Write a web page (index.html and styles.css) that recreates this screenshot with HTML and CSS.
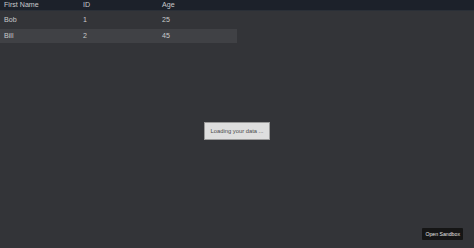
FILE: index.html
```html
<!DOCTYPE html>
<html>
<head>
<meta charset="utf-8">
<link rel="stylesheet" href="styles.css">
</head>
<body>
<div class="grid">
  <div class="header">
    <div class="hrow">
      <div class="cell">First Name</div>
      <div class="cell">ID</div>
      <div class="cell">Age</div>
    </div>
  </div>
  <div class="body">
    <div class="row odd">
      <div class="cell">Bob</div>
      <div class="cell">1</div>
      <div class="cell">25</div>
    </div>
    <div class="row even">
      <div class="cell">Bill</div>
      <div class="cell">2</div>
      <div class="cell">45</div>
    </div>
    <div class="overlay">
      <div class="loading">Loading your data ...</div>
    </div>
  </div>
</div>
<a class="sandbox">Open Sandbox</a>
</body>
</html>
```
FILE: styles.css
```css
html, body {
  margin: 0;
  padding: 0;
  height: 100%;
}
body {
  background: #333438;
  font-family: "Liberation Sans", Arial, sans-serif;
  font-size: 7.1px;
  color: #c9cacc;
  overflow: hidden;
}
.grid {
  display: flex;
  flex-direction: column;
  height: 100%;
}
.header {
  background: #1c212a;
  height: 11px;
  border-bottom: 1px solid #2a2f37;
  box-sizing: border-box;
}
.hrow, .row {
  display: grid;
  grid-template-columns: 79px 79px 79px;
  width: 237px;
}
.hrow .cell {
  line-height: 10px;
  padding-left: 4px;
  color: #c8c9cc;
}
.body {
  flex: 1;
  position: relative;
}
.row .cell {
  padding-left: 4px;
}
.row.odd {
  height: 18px;
}
.row.odd .cell { line-height: 18px; }
.row.even {
  background: #404145;
  height: 14px;
}
.row.even .cell { line-height: 14px; }
.overlay {
  position: absolute;
  inset: 0;
  display: flex;
  align-items: center;
  justify-content: center;
}
.loading {
  background: #dedede;
  border: 1px solid #9a9a9a;
  color: #4a4a4a;
  font-size: 5.8px;
  padding: 0 6px;
  height: 18px;
  line-height: 16px;
  box-sizing: border-box;
  margin-top: 2px;
}
.sandbox {
  position: fixed;
  right: 11px;
  bottom: 8px;
  background: #151515;
  color: #e6e6e6;
  font-size: 5.2px;
  height: 12px;
  line-height: 12px;
  padding: 0 3px;
  border-radius: 1px;
}
```
